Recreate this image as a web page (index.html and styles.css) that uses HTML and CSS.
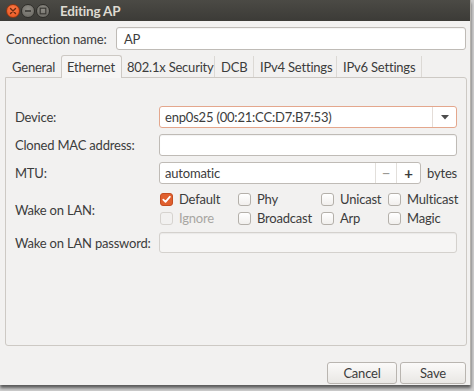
FILE: index.html
```html
<!DOCTYPE html>
<html>
<head>
<meta charset="utf-8">
<link rel="stylesheet" href="styles.css">
</head>
<body>
<div class="window">
  <div class="titlebar">
    <div class="wm-buttons">
      <span class="wm close"><svg width="14" height="14" viewBox="0 0 14 14"><path d="M4.5 4.5 L9.5 9.5 M9.5 4.5 L4.5 9.5" stroke="#6b2a10" stroke-width="1.4" stroke-linecap="round"/></svg></span>
      <span class="wm"><svg width="14" height="14" viewBox="0 0 14 14"><path d="M4 7 H10" stroke="#3a3935" stroke-width="1.6"/></svg></span>
      <span class="wm"><svg width="14" height="14" viewBox="0 0 14 14"><rect x="4.2" y="4.2" width="5.6" height="5.6" fill="none" stroke="#3a3935" stroke-width="1.2"/></svg></span>
    </div>
    <div class="title">Editing AP</div>
  </div>
  <div class="content">
    <div class="conn-row">
      <span class="conn-label">Connection name:</span>
      <div class="entry conn-entry">AP</div>
    </div>
    <div class="notebook">
      <div class="tabs">
        <div class="tab t-general">General</div>
        <div class="tab active t-ethernet">Ethernet</div>
        <div class="tab t-sec">802.1x Security</div>
        <div class="tab t-dcb">DCB</div>
        <div class="tab t-ipv4">IPv4 Settings</div>
        <div class="tab t-ipv6">IPv6 Settings</div>
      </div>
      <div class="panel">
        <div class="form">
          <div class="label">Device:</div>
          <div class="combo">
            <span class="combo-text">enp0s25 (00:21:CC:D7:B7:53)</span>
            <span class="combo-btn"><svg width="8" height="5" viewBox="0 0 8 5"><path d="M0 0 H8 L4 4.5 Z" fill="#4c4c4c"/></svg></span>
          </div>

          <div class="label">Cloned MAC address:</div>
          <div class="entry"></div>

          <div class="label">MTU:</div>
          <div class="mtu">
            <div class="spin">
              <span class="spin-text">automatic</span>
              <span class="spin-btn minus">&#8722;</span>
              <span class="spin-btn plus">+</span>
            </div>
            <span class="unit">bytes</span>
          </div>

          <div class="label wol-label">Wake on LAN:</div>
          <div class="checks">
            <label class="check"><span class="box checked"><svg width="11" height="11" viewBox="0 0 11 11"><path d="M2.3 5.6 L4.5 7.8 L8.8 2.8" fill="none" stroke="#fff" stroke-width="1.8" stroke-linecap="round" stroke-linejoin="round"/></svg></span>Default</label>
            <label class="check"><span class="box"></span>Phy</label>
            <label class="check"><span class="box"></span>Unicast</label>
            <label class="check"><span class="box"></span>Multicast</label>
            <label class="check disabled"><span class="box"></span>Ignore</label>
            <label class="check"><span class="box"></span>Broadcast</label>
            <label class="check"><span class="box"></span>Arp</label>
            <label class="check"><span class="box"></span>Magic</label>
          </div>

          <div class="label">Wake on LAN password:</div>
          <div class="entry disabled-entry"></div>
        </div>
      </div>
    </div>
    <div class="actions">
      <div class="btn cancel">Cancel</div>
      <div class="btn save">Save</div>
    </div>
  </div>
</div>
</body>
</html>
```

FILE: styles.css
```css
* { box-sizing: border-box; }
html, body { margin: 0; padding: 0; }
body {
  width: 474px;
  height: 391px;
  background: #cfcfcf;
  font-family: "Lato", "Liberation Sans", sans-serif;
  font-size: 13px;
  letter-spacing: -0.2px;
  color: #3c3c3c;
  overflow: hidden;
  white-space: nowrap;
}
.window {
  width: 471px;
  height: 385px;
  background: #f2f1f0;
  display: flex;
  flex-direction: column;
  border-right: 1px solid #b5b3ae;
  box-shadow: 0 3px 3px #5a5a5a;
}
.titlebar {
  height: 21px;
  background: linear-gradient(#4b4a45, #3c3b37);
  display: flex;
  align-items: center;
  padding-left: 6px;
}
.wm-buttons { display: flex; gap: 1px; }
.wm {
  width: 14px;
  height: 14px;
  border-radius: 50%;
  background: radial-gradient(circle at 50% 35%, #8e8c86, #66645e);
  display: flex;
  border: 1px solid #2f2e2a;
}
.wm svg { margin: -1px; }
.wm.close { background: radial-gradient(circle at 50% 35%, #fb7a48, #e8531c); border-color: #8f3612; }
.title {
  margin-left: 10px;
  color: #dfdbd2;
  font-weight: bold;
  font-size: 13.5px;
}
.content {
  flex: 1;
  display: flex;
  flex-direction: column;
  padding: 6px 3px 0 5px;
}
.conn-row {
  display: flex;
  align-items: center;
  height: 23px;
}
.conn-label { width: 111px; padding-left: 1px; }
.entry {
  height: 22px;
  background: #fff;
  border: 1px solid #bfbbb6;
  border-radius: 3px;
  padding: 0 6px;
  display: flex;
  align-items: center;
  box-shadow: inset 0 1px 1px rgba(0,0,0,0.05);
}
.conn-entry { flex: 1; height: 23px; margin-right: 1px; padding-left: 7px; }
.notebook { margin-top: 4px; }
.tabs {
  display: flex;
  align-items: flex-end;
  height: 23px;
}
.tab {
  height: 21px;
  padding: 0 0 0 6px;
  display: flex;
  align-items: center;
  border-right: 1px solid #dcd9d5;
  color: #3c3c3c;
}
.t-general { width: 56px; padding-left: 7px; border-right: none; }
.t-ethernet { width: 61px; }
.t-sec { width: 93px; padding-left: 5px; }
.t-dcb { width: 39px; }
.t-ipv4 { width: 83px; }
.t-ipv6 { width: 85px; }
.tab.active {
  height: 23px;
  background: #f6f5f4;
  border: 1px solid #cdc9c4;
  border-bottom: none;
  border-radius: 3px 3px 0 0;
  margin-bottom: -1px;
  position: relative;
  z-index: 1;
  padding: 0 0 1px 5px;
}
.panel {
  height: 269px;
  border: 1px solid #cdc9c4;
  border-radius: 0 3px 3px 3px;
  background: #f2f1f0;
  padding: 28px 10px 0 9px;
}
.form {
  display: grid;
  grid-template-columns: 144px 298px;
  row-gap: 6px;
  align-items: center;
}
.label { color: #3c3c3c; }
.combo {
  height: 22px;
  border: 1px solid #e4a78d;
  border-radius: 3px;
  background: #fff;
  display: flex;
  align-items: stretch;
}
.combo-text { flex: 1; padding-left: 5px; display: flex; align-items: center; }
.combo-btn {
  width: 24px;
  border-left: 1px solid #e4ddd8;
  display: flex;
  align-items: center;
  justify-content: center;
}
.mtu { display: flex; align-items: center; }
.spin {
  width: 263px;
  height: 22px;
  border: 1px solid #bfbbb6;
  border-radius: 3px;
  background: #fff;
  display: flex;
  align-items: stretch;
}
.spin-text { flex: 1; padding-left: 5px; display: flex; align-items: center; }
.spin-btn {
  width: 21px;
  border-left: 1px solid #e2dfdb;
  display: flex;
  align-items: center;
  justify-content: center;
  font-size: 15px;
  color: #3c3c3c;
}
.spin-btn.minus { color: #9a9894; }
.spin-btn.plus { width: 24px; font-weight: bold; }
.unit { margin-left: 6px; }
.wol-label { margin-top: 2px; }
.checks {
  display: grid;
  grid-template-columns: 78px 83px 67px auto;
  grid-auto-rows: 18px;
  row-gap: 1px;
  margin-left: 1px;
  margin-top: 0;
}
.check { display: flex; align-items: center; }
.box {
  width: 13px;
  height: 13px;
  border: 1px solid #b4b0aa;
  border-radius: 3px;
  background: linear-gradient(#ffffff, #f1efed);
  margin-right: 6px;
  display: flex;
  align-items: center;
  justify-content: center;
  flex: none;
}
.box.checked { background: #e0602f; border-color: #c44d20; }
.check.disabled { color: #a8a6a2; }
.check.disabled .box { border-color: #d6d3cf; background: #f2f1f0; }
.disabled-entry { background: #f6f5f4; border-color: #d4d1cd; height: 21px; margin-top: -1px; }
.actions {
  display: flex;
  justify-content: flex-end;
  gap: 3px;
  margin-top: 16px;
  padding-right: 1px;
}
.btn {
  height: 22px;
  border: 1px solid #b9b5b0;
  border-radius: 3px;
  background: linear-gradient(#fbfaf9, #e9e7e4);
  display: flex;
  align-items: center;
  justify-content: center;
}
.cancel { width: 70px; }
.save { width: 66px; }
```
